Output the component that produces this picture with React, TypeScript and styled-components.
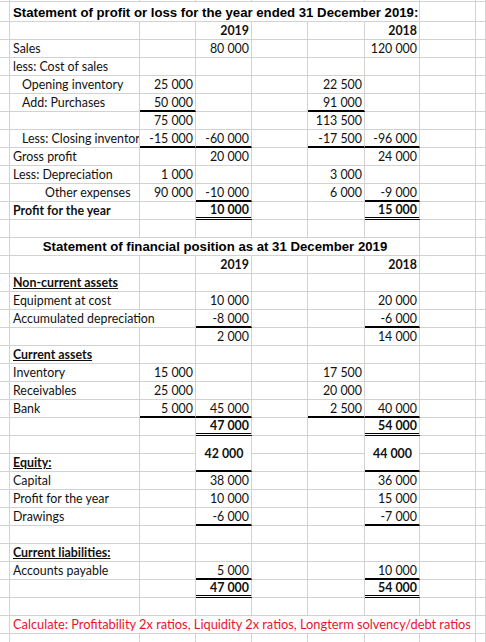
import React from "react";
import styled, { createGlobalStyle, css } from "styled-components";

const GlobalStyle = createGlobalStyle`
  html, body {
    margin: 0;
    padding: 0;
    overflow: hidden;
    background: #ffffff;
  }
`;

type Edge = "thick" | "double";
type Align = "left" | "right" | "center";

type CellSpec = {
  t?: string;
  align?: Align;
  bold?: boolean;
  under?: boolean;
  edge?: Edge;
  indent?: number;
  span?: number;
  rows?: number;
  middle?: boolean;
  title?: boolean;
  red?: boolean;
};

const GRID = "#d2d2d2";

const Sheet = styled.div`
  display: grid;
  grid-template-columns: 10px 130px 56px 56px 56px 57px 55px 56px 1fr;
  grid-template-rows: 2px 20px repeat(35, 18px);
  width: 486px;
  height: 642px;
  overflow: hidden;
  font-family: Lato, "Liberation Sans", sans-serif;
  font-size: 12.4px;
  color: #111;
`;

const Cell = styled.div<{
  $align: Align;
  $bold?: boolean;
  $under?: boolean;
  $edge?: Edge;
  $indent: number;
  $span: number;
  $rows: number;
  $middle?: boolean;
  $title?: boolean;
  $red?: boolean;
}>`
  box-sizing: border-box;
  display: flex;
  align-items: ${({ $middle }) => ($middle ? "center" : "flex-end")};
  justify-content: ${({ $align }) =>
    $align === "right" ? "flex-end" : $align === "center" ? "center" : "flex-start"};
  grid-column: span ${({ $span }) => $span};
  grid-row: span ${({ $rows }) => $rows};
  padding: 0 2px 1px ${({ $indent }) => $indent}px;
  border-right: 1px solid ${GRID};
  border-bottom: 1px solid ${GRID};
  white-space: nowrap;
  overflow: hidden;
  line-height: 15px;
  font-weight: ${({ $bold }) => ($bold ? 700 : 400)};
  text-decoration: ${({ $under }) => ($under ? "underline" : "none")};

  ${({ $edge }) =>
    $edge === "thick" &&
    css`
      border-bottom: 2px solid #000;
      padding-bottom: 0;
    `}
  ${({ $edge }) =>
    $edge === "double" &&
    css`
      border-bottom: 3px double #000;
      padding-bottom: 0;
    `}
  ${({ $title }) =>
    $title &&
    css`
      font-family: "Liberation Sans", Arial, sans-serif;
      font-size: 13.2px;
      font-weight: 700;
      color: #000;
    `}
  ${({ $red }) =>
    $red &&
    css`
      font-size: 12.8px;
      color: #e8142b;
    `}
`;

// cell helpers
const L = (t: string, indent = 3): CellSpec => ({ t, indent });
const H = (t: string): CellSpec => ({ t, bold: true, under: true });
const N = (t: string, edge?: Edge): CellSpec => ({ t, align: "right", edge });
const NB = (t: string, edge?: Edge): CellSpec => ({ t, align: "right", bold: true, edge });
const E: CellSpec = {};

// columns B..I, with C, D, F, G carrying figures
const fin = (b: CellSpec = E, c: CellSpec = E, d: CellSpec = E, f: CellSpec = E, g: CellSpec = E) => [
  b,
  c,
  d,
  E,
  f,
  g,
  E,
  E,
];

const blank = () => fin();

const ROWS: CellSpec[][] = [
  blank(),
  [{ t: "Statement of profit or loss for the year ended 31 December 2019:", title: true, span: 6, indent: 3 }, E, E],
  fin(E, E, NB("2019"), E, NB("2018")),
  fin(L("Sales"), E, N("80 000"), E, N("120 000")),
  fin(L("less: Cost of sales")),
  fin(L("Opening inventory", 12), N("25 000"), E, N("22 500")),
  fin(L("Add: Purchases", 12), N("50 000", "thick"), E, N("91 000", "thick")),
  fin(E, N("75 000"), E, N("113 500")),
  fin(
    L("Less: Closing inventory", 12),
    N("-15 000", "thick"),
    N("-60 000", "thick"),
    N("-17 500", "thick"),
    N("-96 000", "thick")
  ),
  fin(L("Gross profit"), E, N("20 000"), E, N("24 000")),
  fin(L("Less: Depreciation"), N("1 000"), E, N("3 000")),
  fin(L("Other expenses", 35), N("90 000"), N("-10 000", "thick"), N("6 000"), N("-9 000", "thick")),
  fin({ t: "Profit for the year", bold: true }, E, NB("10 000", "double"), E, NB("15 000", "double")),
  blank(),
  [{ t: "Statement of financial position as at 31 December 2019", title: true, span: 6, align: "center" }, E, E],
  fin(E, E, NB("2019"), E, NB("2018")),
  fin(H("Non-current assets")),
  fin(L("Equipment at cost"), E, N("10 000"), E, N("20 000")),
  [{ t: "Accumulated depreciation", span: 2 }, N("-8 000", "thick"), E, E, N("-6 000", "thick"), E, E],
  fin(E, E, N("2 000"), E, N("14 000")),
  fin(H("Current assets")),
  fin(L("Inventory"), N("15 000"), E, N("17 500")),
  fin(L("Receivables"), N("25 000"), E, N("20 000")),
  fin(L("Bank"), N("5 000", "thick"), N("45 000", "thick"), N("2 500", "thick"), N("40 000", "thick")),
  fin(E, E, NB("47 000", "double"), E, NB("54 000", "double")),
  [
    E,
    E,
    { t: "42 000", bold: true, align: "center", rows: 2, middle: true, edge: "thick" },
    E,
    E,
    { t: "44 000", bold: true, align: "center", rows: 2, middle: true, edge: "thick" },
    E,
    E,
  ],
  // D and G are taken by the merged cells above
  [H("Equity:"), E, E, E, E, E],
  fin(L("Capital"), E, N("38 000"), E, N("36 000")),
  fin(L("Profit for the year"), E, N("10 000"), E, N("15 000")),
  fin(L("Drawings"), E, N("-6 000", "thick"), E, N("-7 000", "thick")),
  blank(),
  fin(H("Current liabilities:")),
  fin(L("Accounts payable"), E, N("5 000", "thick"), E, N("10 000", "thick")),
  fin(E, E, NB("47 000", "double"), E, NB("54 000", "double")),
  blank(),
  [{ t: "Calculate: Profitability 2x ratios, Liquidity 2x ratios, Longterm solvency/debt ratios", red: true, span: 7 }, E],
  blank(),
];

const SheetCell = ({ spec }: { spec: CellSpec }) => (
  <Cell
    $align={spec.align ?? "left"}
    $bold={spec.bold}
    $under={spec.under}
    $edge={spec.edge}
    $indent={spec.indent ?? (spec.align === "right" ? 0 : 3)}
    $span={spec.span ?? 1}
    $rows={spec.rows ?? 1}
    $middle={spec.middle}
    $title={spec.title}
    $red={spec.red}
  >
    {spec.t}
  </Cell>
);

const App = () => {
  return (
    <>
      <GlobalStyle />
      <Sheet>
        {ROWS.map((row, r) => (
          <React.Fragment key={r}>
            <SheetCell spec={E} />
            {row.map((spec, c) => (
              <SheetCell key={c} spec={spec} />
            ))}
          </React.Fragment>
        ))}
      </Sheet>
    </>
  );
};

export default App;
